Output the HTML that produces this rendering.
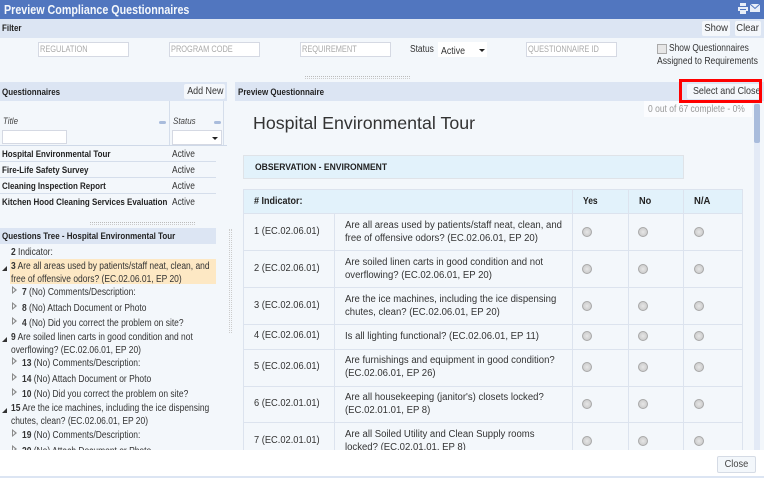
<!DOCTYPE html>
<html><head><meta charset="utf-8"><style>
html,body{margin:0;padding:0}
body{width:764px;height:478px;position:relative;overflow:hidden;background:#f3f7fb;font-family:"Liberation Sans",sans-serif;font-size:10px;color:#333}
.a{position:absolute;white-space:nowrap}
.s{transform:scaleX(.84);transform-origin:0 50%}
.b{font-weight:bold;color:#222;transform:scaleX(.84);transform-origin:0 50%}
.inp{position:absolute;height:13px;background:#fff;border:1px solid #d5d9e3;color:#aaa;font-size:9.5px;line-height:13px;padding-left:1px;box-sizing:content-box;overflow:hidden;white-space:nowrap}
.inp span{display:inline-block;transform:scaleX(.78);transform-origin:0 50%}
.btn{position:absolute;background:#f4f7fb;border-radius:2px;text-align:center;color:#333;font-size:10.5px;white-space:nowrap}
.btn span{display:inline-block;transform:scaleX(.9)}
.hl{position:absolute;background:#dce3ee}
.r{position:absolute;width:8px;height:8px;border-radius:50%;background:radial-gradient(circle,#e6e6e6 0,#d2d2d2 60%,#c4c4c4 100%);border:1px solid #a8a8a8;box-sizing:content-box}
.t{position:absolute;white-space:nowrap;font-size:10px;line-height:13px;color:#333;transform:scaleX(.845);transform-origin:0 50%}
.q{position:absolute;left:345px;white-space:nowrap;font-size:10px;line-height:13px;color:#333;transform:scaleX(.955);transform-origin:0 50%}
.n{position:absolute;left:254px;white-space:nowrap;font-size:10px;color:#333;transform:scaleX(.93);transform-origin:0 50%}
.tri{position:absolute;left:12px;width:0;height:0;border-left:5px solid #8a8a8a;border-top:4px solid transparent;border-bottom:4px solid transparent}
.tri:after{content:"";position:absolute;left:-4px;top:-2px;width:0;height:0;border-left:2.5px solid #f3f7fb;border-top:2px solid transparent;border-bottom:2px solid transparent}
.tb{position:absolute;left:2px;width:0;height:0;border-bottom:5px solid #333;border-left:5px solid transparent}
</style></head><body>
<div class="a" style="left:0;top:0;width:764px;height:19px;background:#5176bf"></div>
<div class="a" style="left:4px;top:1px;font-size:13px;font-weight:bold;color:#f4f7fb;line-height:18px;transform:scaleX(.825);transform-origin:0 50%">Preview Compliance Questionnaires</div>
<svg class="a" style="left:737px;top:3px" width="25" height="11" viewBox="0 0 25 11"><path d="M3 0h6v3H3zM1 4h10v4H9V6H3v2H1zM3 7h6v4H3z" fill="#e8eef8"/><path d="M13 1h10v8H13z" fill="#e8eef8"/><path d="M13 1l5 4.5L23 1" fill="none" stroke="#5176bf" stroke-width="1"/></svg>

<div class="a" style="left:0;top:19px;width:764px;height:19px;background:#dce5f3"></div>
<div class="a b" style="left:2px;top:23px;font-size:9.5px">Filter</div>
<div class="btn" style="left:702px;top:21px;width:28px;height:15px;line-height:15px"><span>Show</span></div>
<div class="btn" style="left:735px;top:21px;width:26px;height:15px;line-height:15px"><span>Clear</span></div>

<div class="inp" style="left:38px;top:42px;width:88px"><span>REGULATION</span></div>
<div class="inp" style="left:169px;top:42px;width:88px"><span>PROGRAM CODE</span></div>
<div class="inp" style="left:300px;top:42px;width:88px"><span>REQUIREMENT</span></div>
<div class="a s" style="left:410px;top:44px;font-size:10px">Status</div>
<div class="a" style="left:438px;top:42px;width:49px;height:15px;background:#fff"></div>
<div class="a s" style="left:441px;top:45px;font-size:10.5px">Active</div>
<div class="a" style="left:479px;top:49px;width:0;height:0;border-top:3px solid #222;border-left:3px solid transparent;border-right:3px solid transparent"></div>
<div class="inp" style="left:526px;top:42px;width:88px"><span>QUESTIONNAIRE ID</span></div>
<div class="a" style="left:657px;top:44px;width:8px;height:8px;background:#e6e6e6;border:1px solid #aaa"></div>
<div class="a s" style="left:669px;top:43px;font-size:10px">Show Questionnaires</div>
<div class="a s" style="left:657px;top:56px;font-size:10px;transform:scaleX(.86)">Assigned to Requirements</div>

<div class="a" style="left:305px;top:76px;width:105px;border-top:1px dotted #bbb"></div>
<div class="a" style="left:305px;top:78px;width:105px;border-top:1px dotted #ccc"></div>

<!-- left panel -->
<div class="a" style="left:0;top:82px;width:227px;height:19px;background:#dce5f3"></div>
<div class="a b" style="left:2px;top:87px;font-size:9.5px">Questionnaires</div>
<div class="btn" style="left:184px;top:84px;width:41px;height:15px;line-height:15px"><span style="transform:scaleX(.85)">Add New</span></div>
<div class="hl" style="left:169px;top:101px;width:1px;height:44px;background:#d5deeb"></div>
<div class="hl" style="left:223px;top:101px;width:1px;height:44px;background:#d5deeb"></div>
<div class="a s" style="left:3px;top:116px;font-style:italic;font-size:9.5px;color:#444">Title</div>
<div class="a s" style="left:173px;top:116px;font-style:italic;font-size:9.5px;color:#444">Status</div>
<div class="a" style="left:159px;top:121px;width:7px;height:3px;border-radius:2px;background:#a9bcdc"></div>
<div class="a" style="left:214px;top:121px;width:7px;height:3px;border-radius:2px;background:#a9bcdc"></div>
<div class="a" style="left:2px;top:130px;width:63px;height:12px;background:#fff;border:1px solid #d5d9e3"></div>
<div class="a" style="left:172px;top:130px;width:48px;height:13px;background:#fff;border:1px solid #d5d9e3"></div>
<div class="a" style="left:212px;top:137px;width:0;height:0;border-top:3px solid #222;border-left:3px solid transparent;border-right:3px solid transparent"></div>
<div class="hl" style="left:0;top:145px;width:227px;height:1px;background:#cfd9e8"></div>
<div class="a b" style="left:2px;top:149px;font-size:9.5px">Hospital Environmental Tour</div><div class="a s" style="left:172px;top:149px">Active</div>
<div class="hl" style="left:0;top:161px;width:216px;height:1px;background:#d5deeb"></div>
<div class="a b" style="left:2px;top:165px;font-size:9.5px">Fire-Life Safety Survey</div><div class="a s" style="left:172px;top:165px">Active</div>
<div class="hl" style="left:0;top:177px;width:216px;height:1px;background:#d5deeb"></div>
<div class="a b" style="left:2px;top:181px;font-size:9.5px">Cleaning Inspection Report</div><div class="a s" style="left:172px;top:181px">Active</div>
<div class="hl" style="left:0;top:193px;width:216px;height:1px;background:#d5deeb"></div>
<div class="a b" style="left:2px;top:197px;font-size:9.5px">Kitchen Hood Cleaning Services Evaluation</div><div class="a s" style="left:172px;top:197px">Active</div>

<div class="a" style="left:90px;top:222px;width:105px;border-top:1px dotted #bbb"></div>
<div class="a" style="left:90px;top:224px;width:105px;border-top:1px dotted #ccc"></div>
<div class="a" style="left:229px;top:229px;height:104px;border-left:1px dotted #ccc"></div>
<div class="a" style="left:231px;top:229px;height:104px;border-left:1px dotted #ccc"></div>

<div class="a" style="left:0;top:228px;width:216px;height:16px;background:#dce5f3"></div>
<div class="a b" style="left:2px;top:231px;font-size:9.5px">Questions Tree - Hospital Environmental Tour</div>

<div class="a" style="left:10px;top:259px;width:206px;height:25px;background:#fde8c4"></div>
<div class="t" style="left:11px;top:246px"><b>2</b> Indicator:</div>
<div class="tb" style="top:266px"></div>
<div class="t" style="left:11px;top:260px"><b>3</b> Are all areas used by patients/staff neat, clean, and<br>free of offensive odors? (EC.02.06.01, EP 20)</div>
<div class="tri" style="top:286px"></div><div class="t" style="left:22px;top:286px"><b>7</b> (No) Comments/Description:</div>
<div class="tri" style="top:302px"></div><div class="t" style="left:22px;top:302px"><b>8</b> (No) Attach Document or Photo</div>
<div class="tri" style="top:317px"></div><div class="t" style="left:22px;top:317px"><b>4</b> (No) Did you correct the problem on site?</div>
<div class="tb" style="top:337px"></div>
<div class="t" style="left:11px;top:331px"><b>9</b> Are soiled linen carts in good condition and not<br>overflowing? (EC.02.06.01, EP 20)</div>
<div class="tri" style="top:357px"></div><div class="t" style="left:22px;top:357px"><b>13</b> (No) Comments/Description:</div>
<div class="tri" style="top:373px"></div><div class="t" style="left:22px;top:373px"><b>14</b> (No) Attach Document or Photo</div>
<div class="tri" style="top:388px"></div><div class="t" style="left:22px;top:388px"><b>10</b> (No) Did you correct the problem on site?</div>
<div class="tb" style="top:408px"></div>
<div class="t" style="left:11px;top:402px"><b>15</b> Are the ice machines, including the ice dispensing<br>chutes, clean? (EC.02.06.01, EP 20)</div>
<div class="tri" style="top:429px"></div><div class="t" style="left:22px;top:429px"><b>19</b> (No) Comments/Description:</div>
<div class="tri" style="top:445px"></div><div class="t" style="left:22px;top:445px"><b>20</b> (No) Attach Document or Photo</div>

<!-- right panel -->
<div class="a" style="left:235px;top:82px;width:529px;height:19px;background:#dce5f3"></div>
<div class="a b" style="left:238px;top:87px;font-size:9.5px">Preview Questionnaire</div>
<div class="a" style="left:644px;top:101px;width:108px;height:16px;background:#fbfcfe"></div>
<div class="a s" style="left:648px;top:104px;font-size:10px;color:#999;transform:scaleX(.85)">0 out of 67 complete - 0%</div>
<div class="a" style="left:754px;top:101px;width:6px;height:349px;background:#e3eaf6"></div>
<div class="a" style="left:754px;top:104px;width:6px;height:39px;background:#a9bcdc;border-radius:2px"></div>
<div class="a" style="left:253px;top:112px;font-size:17.8px;line-height:22px;color:#333">Hospital Environmental Tour</div>

<div class="a" style="left:243px;top:155px;width:439px;height:22px;background:#e2f2fb;border:1px solid #dfe3e8"></div>
<div class="a b" style="left:255px;top:162px;font-size:9.5px;transform:scaleX(.9)">OBSERVATION - ENVIRONMENT</div>

<div class="a" style="left:243px;top:189px;width:500px;height:24px;background:#e2f2fb"></div>
<div class="hl" style="left:243px;top:189px;width:500px;height:1px"></div>
<div class="hl" style="left:243px;top:213px;width:500px;height:1px"></div>
<div class="hl" style="left:243px;top:250px;width:500px;height:1px"></div>
<div class="hl" style="left:243px;top:287px;width:500px;height:1px"></div>
<div class="hl" style="left:243px;top:324px;width:500px;height:1px"></div>
<div class="hl" style="left:243px;top:349px;width:500px;height:1px"></div>
<div class="hl" style="left:243px;top:386px;width:500px;height:1px"></div>
<div class="hl" style="left:243px;top:422px;width:500px;height:1px"></div>
<div class="hl" style="left:243px;top:189px;width:1px;height:261px"></div>
<div class="hl" style="left:334px;top:213px;width:1px;height:237px"></div>
<div class="hl" style="left:572px;top:189px;width:1px;height:261px"></div>
<div class="hl" style="left:628px;top:189px;width:1px;height:261px"></div>
<div class="hl" style="left:683px;top:189px;width:1px;height:261px"></div>
<div class="hl" style="left:742px;top:189px;width:1px;height:261px"></div>

<div class="a b" style="left:254px;top:196px;font-size:10px;transform:scaleX(.9)"># Indicator:</div>
<div class="a b" style="left:583px;top:196px;font-size:10px;transform:scaleX(.85)">Yes</div>
<div class="a b" style="left:639px;top:196px;font-size:10px;transform:scaleX(.92)">No</div>
<div class="a b" style="left:694px;top:196px;font-size:10px;transform:scaleX(.95)">N/A</div>

<div class="n" style="top:226px">1 (EC.02.06.01)</div>
<div class="q" style="top:219px">Are all areas used by patients/staff neat, clean, and<br>free of offensive odors? (EC.02.06.01, EP 20)</div>
<div class="n" style="top:263px">2 (EC.02.06.01)</div>
<div class="q" style="top:256px">Are soiled linen carts in good condition and not<br>overflowing? (EC.02.06.01, EP 20)</div>
<div class="n" style="top:300px">3 (EC.02.06.01)</div>
<div class="q" style="top:293px">Are the ice machines, including the ice dispensing<br>chutes, clean? (EC.02.06.01, EP 20)</div>
<div class="n" style="top:330px">4 (EC.02.06.01)</div>
<div class="q" style="top:330px">Is all lighting functional? (EC.02.06.01, EP 11)</div>
<div class="n" style="top:361px">5 (EC.02.06.01)</div>
<div class="q" style="top:354px">Are furnishings and equipment in good condition?<br>(EC.02.06.01, EP 26)</div>
<div class="n" style="top:398px">6 (EC.02.01.01)</div>
<div class="q" style="top:391px">Are all housekeeping (janitor's) closets locked?<br>(EC.02.01.01, EP 8)</div>
<div class="n" style="top:435px">7 (EC.02.01.01)</div>
<div class="q" style="top:428px">Are all Soiled Utility and Clean Supply rooms<br>locked? (EC.02.01.01, EP 8)</div>

<div class="r" style="left:582px;top:227px"></div><div class="r" style="left:638px;top:227px"></div><div class="r" style="left:694px;top:227px"></div>
<div class="r" style="left:582px;top:264px"></div><div class="r" style="left:638px;top:264px"></div><div class="r" style="left:694px;top:264px"></div>
<div class="r" style="left:582px;top:301px"></div><div class="r" style="left:638px;top:301px"></div><div class="r" style="left:694px;top:301px"></div>
<div class="r" style="left:582px;top:331px"></div><div class="r" style="left:638px;top:331px"></div><div class="r" style="left:694px;top:331px"></div>
<div class="r" style="left:582px;top:362px"></div><div class="r" style="left:638px;top:362px"></div><div class="r" style="left:694px;top:362px"></div>
<div class="r" style="left:582px;top:399px"></div><div class="r" style="left:638px;top:399px"></div><div class="r" style="left:694px;top:399px"></div>
<div class="r" style="left:582px;top:436px"></div><div class="r" style="left:638px;top:436px"></div><div class="r" style="left:694px;top:436px"></div>

<div class="btn" style="left:687px;top:84px;width:73px;height:15px;line-height:15px;font-size:10.5px"><span style="transform:scaleX(.85)">Select and Close</span></div>
<div class="a" style="left:679px;top:79px;width:77px;height:18px;border:3px solid #f00"></div>

<!-- footer -->
<div class="a" style="left:0;top:450px;width:764px;height:26px;background:#fff"></div>
<div class="a" style="left:0;top:476px;width:764px;height:2px;background:#dce5f3"></div>
<div class="a" style="left:717px;top:456px;width:37px;height:15px;background:#f3f7fb;border:1px solid #d5dbe5;border-radius:2px;text-align:center;line-height:15px;font-size:10.5px;color:#444"><span style="display:inline-block;transform:scaleX(.88)">Close</span></div>
</body></html>
